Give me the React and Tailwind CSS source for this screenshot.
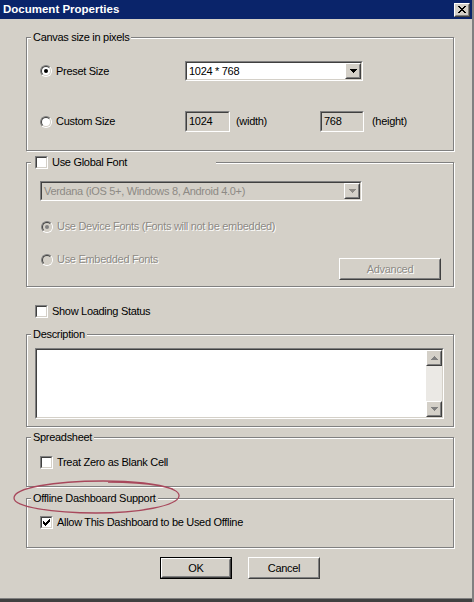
import React from 'react';

// Windows classic 3D edges
const Sunken = ({ className = '', inner = 'bg-white', children }) => (
  <div className={`border border-t-[#808080] border-l-[#808080] border-b-white border-r-white ${className}`}>
    <div className={`h-full flex border border-t-[#404040] border-l-[#404040] border-b-[#d4d0c8] border-r-[#d4d0c8] ${inner}`}>
      {children}
    </div>
  </div>
);

const Raised = ({ className = '', children }) => (
  <div className={`border border-t-white border-l-white border-b-[#404040] border-r-[#404040] bg-[#d4d0c8] ${className}`}>
    <div className="h-full flex items-center justify-center border border-t-[#d4d0c8] border-l-[#d4d0c8] border-b-[#808080] border-r-[#808080]">
      {children}
    </div>
  </div>
);

const Arrow = ({ up = false, color = '#000' }) => (
  <svg width="7" height="4" viewBox="0 0 7 4" shapeRendering="crispEdges" className={up ? 'rotate-180' : ''}>
    <path d="M0 0h7v1h-1v1h-1v1h-1v1h-1v-1h-1v-1h-1v-1h-1z" fill={color} />
  </svg>
);

const Check = ({ checked }) => (
  <div className="w-[13px] h-[13px] shrink-0 border border-t-[#808080] border-l-[#808080] border-b-white border-r-white">
    <div className="w-full h-full flex items-center justify-center bg-white border border-t-[#404040] border-l-[#404040] border-b-[#d4d0c8] border-r-[#d4d0c8]">
      {checked && (
        <svg width="7" height="7" viewBox="0 0 7 7" shapeRendering="crispEdges">
          <rect x="6" y="0" width="1" height="1" />
          <rect x="5" y="1" width="2" height="1" />
          <rect x="0" y="2" width="1" height="1" />
          <rect x="4" y="2" width="3" height="1" />
          <rect x="0" y="3" width="2" height="1" />
          <rect x="3" y="3" width="3" height="1" />
          <rect x="0" y="4" width="5" height="1" />
          <rect x="1" y="5" width="3" height="1" />
          <rect x="2" y="6" width="1" height="1" />
        </svg>
      )}
    </div>
  </div>
);

const Radio = ({ checked, disabled }) => (
  <div className="w-[12px] h-[12px] shrink-0 rounded-full border border-t-[#808080] border-l-[#808080] border-b-white border-r-white">
    <div
      className={`w-full h-full flex items-center justify-center rounded-full border border-t-[#404040] border-l-[#404040] border-b-[#d4d0c8] border-r-[#d4d0c8] ${
        disabled ? 'bg-[#d4d0c8]' : 'bg-white'
      }`}
    >
      {checked && <div className={`w-[4px] h-[4px] rounded-full ${disabled ? 'bg-[#808080]' : 'bg-black'}`} />}
    </div>
  </div>
);

const Group = ({ legend, className = '', children }) => (
  <fieldset
    className={`ml-[26px] w-[428px] border border-[#808080] shadow-[inset_1px_1px_0_#fff,1px_1px_0_#fff] ${className}`}
  >
    <legend className="ml-[4px] bg-[#d4d0c8] leading-[13px]">{legend}</legend>
    {children}
  </fieldset>
);

const dim = 'text-[#8d8a85] [text-shadow:1px_1px_0_#fff]';

export default function App() {
  return (
    <div className="relative w-[474px] h-[602px] flex flex-col bg-[#d4d0c8] border-r-2 border-r-[#808080] font-['Liberation_Sans',Arial,sans-serif] text-[11px] tracking-[-0.3px] text-black overflow-hidden">
      {/* title bar */}
      <div className="h-[19px] shrink-0 flex items-center justify-between bg-[#0a246a] pl-[3px] pr-[2px]">
        <span className="text-white font-bold text-[11.5px] tracking-normal">Document Properties</span>
        <Raised className="w-[16px] h-[14px]">
          <svg width="8" height="7" viewBox="0 0 8 7" shapeRendering="crispEdges">
            <path d="M0 0h2v1h1v1h2v-1h1v-1h2v1h-1v1h-1v1h-1v1h1v1h1v1h1v1h-2v-1h-1v-1h-2v1h-1v1h-2v-1h1v-1h1v-1h1v-1h-1v-1h-1v-1h-1z" />
          </svg>
        </Raised>
      </div>

      {/* Canvas size */}
      <Group legend={<span className="px-[2px]">Canvas size in pixels</span>} className="mt-[12px] pt-[17px] pb-[18px]">
        <div className="flex items-center pl-[13px] h-[20px]">
          <div className="w-[145px] flex items-center gap-[4px]">
            <Radio checked />
            <span>Preset Size</span>
          </div>
          <Sunken className="w-[178px] h-[20px]">
            <span className="flex-1 pl-[2px] leading-[16px]">1024 * 768</span>
            <Raised className="w-[16px] h-[16px]">
              <Arrow />
            </Raised>
          </Sunken>
        </div>
        <div className="flex items-center pl-[13px] h-[21px] mt-[30px]">
          <div className="w-[145px] flex items-center gap-[4px]">
            <Radio />
            <span>Custom Size</span>
          </div>
          <Sunken className="w-[45px] h-[21px]" inner="bg-[#d4d0c8]">
            <span className="pl-[2px] pt-[1px] leading-[14px]">1024</span>
          </Sunken>
          <span className="w-[90px] pl-[6px]">(width)</span>
          <Sunken className="w-[44px] h-[21px]" inner="bg-[#d4d0c8]">
            <span className="pl-[2px] pt-[1px] leading-[14px]">768</span>
          </Sunken>
          <span className="pl-[8px]">(height)</span>
        </div>
      </Group>

      {/* Global font */}
      <Group
        legend={
          <span className="w-[185px] flex items-center gap-[4px] pl-[4px]">
            <Check />
            <span>Use Global Font</span>
          </span>
        }
        className="mt-[5px] pt-[12px] pb-[6px]"
      >
        <Sunken className="ml-[13px] w-[322px] h-[20px]" inner="bg-[#d4d0c8]">
          <span className="flex-1 pl-[2px] leading-[16px] text-[#8d8a85]">Verdana (iOS 5+, Windows 8, Android 4.0+)</span>
          <Raised className="w-[16px] h-[16px]">
            <Arrow color="#8d8a85" />
          </Raised>
        </Sunken>
        <div className="flex items-center gap-[4px] ml-[14px] mt-[19px] h-[13px]">
          <Radio checked disabled />
          <span className={dim}>Use Device Fonts (Fonts will not be embedded)</span>
        </div>
        <div className="flex items-start justify-between ml-[14px] mr-[12px] mt-[20px]">
          <div className="flex items-center gap-[4px] h-[13px]">
            <Radio disabled />
            <span className={dim}>Use Embedded Fonts</span>
          </div>
          <Raised className="w-[102px] h-[22px] mt-[5px]">
            <span className={dim}>Advanced</span>
          </Raised>
        </div>
      </Group>

      <div className="flex items-center gap-[4px] ml-[35px] mt-[18px] h-[13px]">
        <Check />
        <span>Show Loading Status</span>
      </div>

      {/* Description */}
      <Group legend={<span className="px-[2px]">Description</span>} className="mt-[10px] pt-[7px] pb-[7px]">
        <Sunken className="ml-[8px] w-[409px] h-[71px]">
          <div className="flex-1" />
          <div className="w-[16px] flex flex-col justify-between bg-[#ebe9e5]">
            <Raised className="w-[16px] h-[16px]">
              <Arrow up color="#808080" />
            </Raised>
            <Raised className="w-[16px] h-[16px]">
              <Arrow color="#808080" />
            </Raised>
          </div>
        </Sunken>
      </Group>

      {/* Spreadsheet */}
      <Group legend={<span className="px-[2px]">Spreadsheet</span>} className="mt-[4px] pt-[12px] pb-[17px]">
        <div className="flex items-center gap-[4px] ml-[13px] h-[13px]">
          <Check />
          <span>Treat Zero as Blank Cell</span>
        </div>
      </Group>

      {/* Offline */}
      <Group legend={<span className="px-[2px]">Offline Dashboard Support</span>} className="mt-[5px] pt-[11px] pb-[18px]">
        <div className="flex items-center gap-[4px] ml-[13px] h-[13px]">
          <Check checked />
          <span>Allow This Dashboard to be Used Offline</span>
        </div>
      </Group>

      {/* buttons */}
      <div className="ml-[26px] w-[428px] flex justify-center gap-[16px] mt-[9px]">
        <div className="border border-black">
          <Raised className="w-[70px] h-[20px]">
            <span>OK</span>
          </Raised>
        </div>
        <Raised className="w-[72px] h-[22px]">
          <span>Cancel</span>
        </Raised>
      </div>

      <div className="mt-auto h-[4px] shrink-0 border-t border-t-[#808080] bg-[#404040]" />

      {/* hand-drawn annotation */}
      <svg className="absolute left-[8px] top-[477px]" width="180" height="40" viewBox="0 0 180 40" fill="none">
        <path
          d="M100 5 C140 5 172 10 171 19 C170 29 130 36 88 36 C45 36 6 30 6 21 C6 11 45 4 95 4 C125 4 150 7 165 12"
          stroke="#a8485c"
          strokeWidth="1.3"
        />
      </svg>
    </div>
  );
}
